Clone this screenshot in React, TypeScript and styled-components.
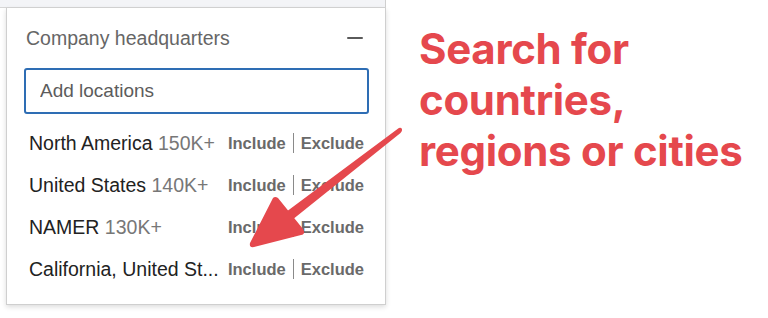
import { createGlobalStyle, styled } from "styled-components";

const GlobalStyle = createGlobalStyle`
    html, body {
        margin: 0;
        padding: 0;
        background: #ffffff;
    }
    body {
        font-family: "Liberation Sans", Arial, sans-serif;
        width: 768px;
        height: 318px;
        overflow: hidden;
    }
`;

const Page = styled.div`
    position: relative;
    width: 768px;
    height: 318px;
    display: flex;
    align-items: flex-start;
`;

const LeftColumn = styled.div`
    width: 386px;
    display: flex;
    flex-direction: column;
`;

const TopStrip = styled.div`
    height: 8px;
    background: #f3f4f7;
    border-right: 1px solid #cfcfcf;
    border-bottom: 1px solid #d6d6d6;
    box-sizing: border-box;
`;

const Panel = styled.div`
    margin-left: 6px;
    border: 1px solid #cfcfcf;
    border-top: none;
    background: #ffffff;
    box-shadow: 0 2px 5px rgba(0, 0, 0, 0.14);
    padding: 0 16px 15px 17px;
    box-sizing: border-box;
    height: 297px;
`;

const Header = styled.div`
    display: flex;
    justify-content: space-between;
    align-items: center;
    height: 60px;
    padding: 0 6px 0 2px;
`;

const HeaderTitle = styled.span`
    font-size: 19.5px;
    color: #666666;
`;

const Minus = styled.span`
    width: 16px;
    height: 2px;
    background: #5a5a5a;
    border-radius: 1px;
`;

const SearchInput = styled.input`
    display: block;
    width: 345px;
    height: 46px;
    box-sizing: border-box;
    border: 2px solid #2e6db4;
    border-radius: 3px;
    padding: 0 14px;
    font-family: "Liberation Sans", Arial, sans-serif;
    font-size: 19px;
    color: #333333;
    outline: none;

    &::placeholder {
        color: #5c5c5c;
    }
`;

const List = styled.div`
    display: flex;
    flex-direction: column;
    margin-top: 8px;
`;

const Row = styled.div`
    display: flex;
    align-items: center;
    justify-content: space-between;
    height: 42px;
    padding-left: 5px;
    padding-right: 5px;
`;

const Place = styled.span`
    font-size: 19.5px;
    color: #222222;
    white-space: nowrap;
`;

const Count = styled.span`
    color: #777777;
`;

const Actions = styled.div`
    display: flex;
    align-items: center;
    gap: 7px;
`;

const Action = styled.span`
    font-size: 16.5px;
    font-weight: 700;
    color: #6a6a6a;
`;

const Divider = styled.span`
    width: 1px;
    height: 20px;
    background: #8a8a8a;
`;

const Callout = styled.div`
    margin: 23px 0 0 33px;
    font-family: Inter, "Noto Sans", sans-serif;
    font-weight: 700;
    font-size: 42px;
    line-height: 51px;
    letter-spacing: -0.3px;
    color: #e5484d;
`;

const ArrowLayer = styled.svg`
    position: absolute;
    left: 0;
    top: 0;
    pointer-events: none;
`;

const rows = [
    { name: "North America", count: "150K+" },
    { name: "United States", count: "140K+" },
    { name: "NAMER", count: "130K+" },
    { name: "California, United St...", count: "" },
];

export default function App() {
    return (
        <>
            <GlobalStyle />
            <Page>
                <LeftColumn>
                    <TopStrip />
                    <Panel>
                        <Header>
                            <HeaderTitle>Company headquarters</HeaderTitle>
                            <Minus />
                        </Header>
                        <SearchInput placeholder="Add locations" />
                        <List>
                            {rows.map((r) => (
                                <Row key={r.name}>
                                    <Place>
                                        {r.name}
                                        {r.count && <Count> {r.count}</Count>}
                                    </Place>
                                    <Actions>
                                        <Action>Include</Action>
                                        <Divider />
                                        <Action>Exclude</Action>
                                    </Actions>
                                </Row>
                            ))}
                        </List>
                    </Panel>
                </LeftColumn>
                <Callout>
                    Search for
                    <br />
                    countries,
                    <br />
                    regions or cities
                </Callout>
                <ArrowLayer width="768" height="318" viewBox="0 0 768 318">
                    <path
                        d="M400.5 133 L292 220 L286 212 L397.5 129 Q400.5 126.5 402 129 Q402.5 131.5 400.5 133 Z"
                        fill="#e5484d"
                    />
                    <path
                        d="M273 198 Q275 196 278 198 L303 229 Q306 234 301 235 L254 247 Q249 248 250 243 Z"
                        fill="#e5484d"
                    />
                </ArrowLayer>
            </Page>
        </>
    );
}
